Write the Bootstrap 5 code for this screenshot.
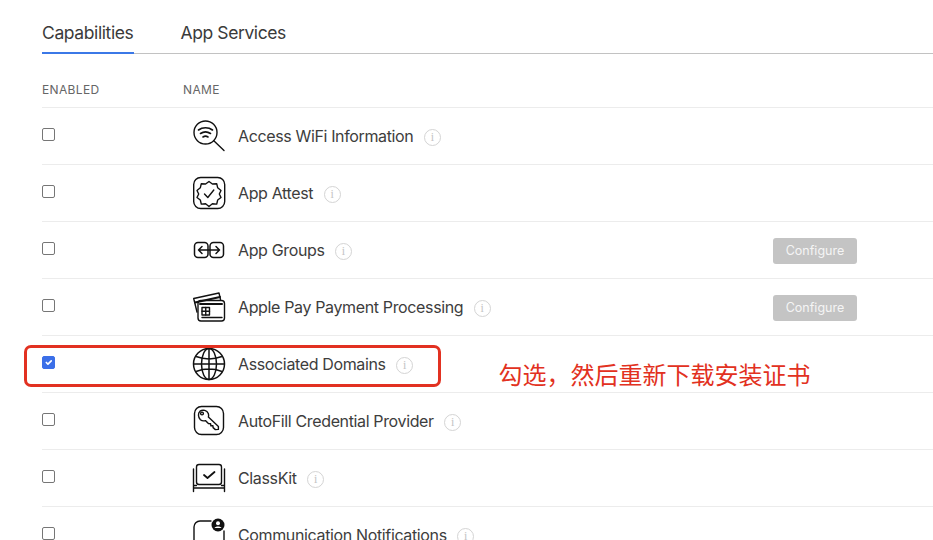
<!doctype html>
<html lang="en">
<head>
<meta charset="utf-8">
<title>Capabilities</title>
<link href="https://cdn.jsdelivr.net/npm/bootstrap@5.3.0/dist/css/bootstrap.min.css" rel="stylesheet">
<style>
html,body{height:540px;overflow:hidden}
body{font-family:Inter,"Liberation Sans",sans-serif;color:#333;background:#fff;position:relative}
.page-wrap{padding:17px 0 0 42px;width:933px}
.tab-bar{border-bottom:1px solid #c2c2c2;height:37px;gap:46.500px}
.tab-item{font-size:17.500px;line-height:31px;height:37px;color:#3a3a3a;letter-spacing:-.4px;text-decoration:none;white-space:nowrap}
.tab-active{border-bottom:2px solid #3b78e7;width:92px}
.head-row{height:54px;align-items:flex-end;padding-bottom:10px;font-size:12px;line-height:15px;color:#666;border-bottom:1px solid #ececec;letter-spacing:.35px}
.col-enabled{width:141px;flex:none}
.cap-row{height:57px;border-bottom:1px solid #ececec;align-items:center}
.form-check-input.cap-check[type=checkbox]{width:13px;height:13px;margin:0 0 3px 0;border:1px solid #767676;border-radius:2px;display:block;box-shadow:none}
.form-check-input.cap-check[type=checkbox]:checked{background-color:#3b6fe8;border-color:#3b6fe8}
.icon-cell{width:55px;flex:none;padding-left:9px;display:flex;align-items:center}
.cap-ico{width:34px;height:34px;display:block;color:#111}
.cap-name{font-size:16px;line-height:20px;letter-spacing:-.36px;color:#3d3d3d;white-space:nowrap}
.info-dot{width:17px;height:17px;margin-left:10.500px;margin-top:2px;flex:none;border:1px solid #d4d4d4;border-radius:50%;color:#c4c4c4;font:12px/15px "Liberation Serif",serif;text-align:center}
.cfg-btn{background:#c4c4c4;border:0;font-size:12.500px;line-height:16px;height:26px;width:84px;padding:0;border-radius:3px;margin:2px 76px 0 0}
.cfg-btn:disabled{background:#c4c4c4;color:#f5f5f5;opacity:1}
.clip-row{height:34px;overflow:hidden}
.clip-inner{height:57px}
.mark-box{position:absolute;left:24px;top:345px;width:417px;height:42px;border:3px solid #e23121;border-radius:7px;pointer-events:none}
.mark-note{position:absolute;left:498.500px;top:356px;font:400 24px/36px "Noto Sans CJK SC",sans-serif;color:#e23121;white-space:nowrap}
</style>
</head>
<body>
<div class="page-wrap">
  <nav class="tab-bar d-flex">
    <a class="tab-item tab-active" href="#">Capabilities</a>
    <a class="tab-item" href="#">App Services</a>
  </nav>
  <div class="head-row d-flex"><div class="col-enabled">ENABLED</div><div>NAME</div></div>

  <div class="cap-row d-flex">
    <div class="col-enabled"><input class="form-check-input cap-check" type="checkbox" aria-label="Access WiFi Information"></div>
    <div class="icon-cell"><svg class="cap-ico" viewBox="0 0 34 34" fill="none" stroke="currentColor" stroke-width="1.400" stroke-linecap="round"><circle cx="13.500" cy="13.500" r="11.500"/><path d="M21.800 21.800 32 31.500"/><path d="M6.500 11c4-3 10-3 14 0M8.500 14.500c3-2 7-2 10 0M11 18c1.500-1 3.500-1 5 0" stroke-width="1.600"/></svg></div>
    <div class="cap-name">Access WiFi Information</div><div class="info-dot">i</div>
  </div>

  <div class="cap-row d-flex">
    <div class="col-enabled"><input class="form-check-input cap-check" type="checkbox" aria-label="App Attest"></div>
    <div class="icon-cell"><svg class="cap-ico" viewBox="0 0 34 34" fill="none" stroke="currentColor" stroke-width="1.400" stroke-linejoin="round" stroke-linecap="round"><rect x="1.700" y="1.500" width="31" height="31" rx="7"/><path d="M17 5.500l3.400 2.500 4.300-.3 1 4.100 3.300 2.700-1.700 3.500 1.700 3.500-3.300 2.500-1 4.100-4.300-.3L17 30.500l-3.400-2.700-4.300.3-1-4.100L5 21.500 6.700 18 5 14.500l3.300-2.700 1-4.100 4.300.3z"/><path d="M12.500 18l3.300 3.500 6-7.500"/></svg></div>
    <div class="cap-name">App Attest</div><div class="info-dot">i</div>
  </div>

  <div class="cap-row d-flex">
    <div class="col-enabled"><input class="form-check-input cap-check" type="checkbox" aria-label="App Groups"></div>
    <div class="icon-cell"><svg class="cap-ico" viewBox="0 0 34 34" fill="none" stroke="currentColor" stroke-width="1.500" stroke-linecap="round" stroke-linejoin="round"><rect x="2.500" y="9.500" width="13.500" height="15" rx="3.500"/><rect x="18" y="9.500" width="13.500" height="15" rx="3.500"/><path d="M6.500 17H27.500M10 13.500 6.500 17l3.500 3.500M24 13.500l3.500 3.500-3.500 3.500"/></svg></div>
    <div class="cap-name">App Groups</div><div class="info-dot">i</div>
    <button class="btn cfg-btn ms-auto" disabled>Configure</button>
  </div>

  <div class="cap-row d-flex">
    <div class="col-enabled"><input class="form-check-input cap-check" type="checkbox" aria-label="Apple Pay Payment Processing"></div>
    <div class="icon-cell"><svg class="cap-ico" viewBox="0 0 34 34" fill="none" stroke="currentColor" stroke-width="1.400" stroke-linecap="round" stroke-linejoin="round"><path d="M5 22 1.700 8.500 27 3l1.500 6.500"/><path d="M3 12.500 28 7" stroke-width="2"/><rect x="6" y="10.500" width="26.500" height="20.500" rx="3"/><path d="M8 14h22" stroke-width="2"/><rect x="10" y="17.500" width="7.500" height="7.500"/><path d="M13.750 17.500v7.500M10 21.250h7.500M10 27.500h20"/></svg></div>
    <div class="cap-name">Apple Pay Payment Processing</div><div class="info-dot">i</div>
    <button class="btn cfg-btn ms-auto" disabled>Configure</button>
  </div>

  <div class="cap-row d-flex">
    <div class="col-enabled"><input class="form-check-input cap-check" type="checkbox" checked aria-label="Associated Domains"></div>
    <div class="icon-cell"><svg class="cap-ico" viewBox="0 0 34 34" fill="none" stroke="currentColor" stroke-width="1.500"><circle cx="17" cy="17" r="15.500"/><ellipse cx="17" cy="17" rx="7.500" ry="15.500"/><path d="M17 1.500v31M1.500 17h31M4 9.500c8 3 18 3 26 0M4 24.500c8-3 18-3 26 0"/></svg></div>
    <div class="cap-name">Associated Domains</div><div class="info-dot">i</div>
  </div>

  <div class="cap-row d-flex">
    <div class="col-enabled"><input class="form-check-input cap-check" type="checkbox" aria-label="AutoFill Credential Provider"></div>
    <div class="icon-cell"><svg class="cap-ico" viewBox="0 0 34 34" fill="none" stroke="currentColor" stroke-width="1.400" stroke-linecap="round" stroke-linejoin="round"><rect x="2.500" y="2.500" width="29" height="28" rx="7"/><path d="M8 7.200c3-2 7-.8 8.300 2.300.5 1.300.4 2.600.1 3.600l10 9.300v3l-3 .2-2.300-2-.2-2-2 .2-.3-2-2.200-.2-3-3c-1.500.5-3.500.3-5-.9C6 13.500 5.800 9 8 7.200z"/><circle cx="10" cy="9.500" r="1.400"/></svg></div>
    <div class="cap-name">AutoFill Credential Provider</div><div class="info-dot">i</div>
  </div>

  <div class="cap-row d-flex">
    <div class="col-enabled"><input class="form-check-input cap-check" type="checkbox" aria-label="ClassKit"></div>
    <div class="icon-cell"><svg class="cap-ico" viewBox="0 0 34 34" fill="none" stroke="currentColor" stroke-width="1.400" stroke-linecap="round" stroke-linejoin="round"><rect x="4.500" y="3.500" width="25" height="20" rx="2.500"/><path d="M12 14l3.500 3 7-6" stroke-width="1.800"/><path d="M1.500 8v22.500M32.500 8v22.500M1.500 27h31M1.500 24.500h3M29.500 24.500h3"/></svg></div>
    <div class="cap-name">ClassKit</div><div class="info-dot">i</div>
  </div>

  <div class="clip-row">
    <div class="cap-row d-flex clip-inner">
      <div class="col-enabled"><input class="form-check-input cap-check" type="checkbox" aria-label="Communication Notifications"></div>
      <div class="icon-cell"><svg class="cap-ico" viewBox="0 0 34 34" fill="none" stroke="currentColor" stroke-width="1.400" stroke-linecap="round"><path d="M19 3H8a6 6 0 0 0-6 6v20a3 3 0 0 0 3 3h24a3 3 0 0 0 3-3V13"/><circle cx="26" cy="7" r="6.500" fill="currentColor" stroke="none"/><circle cx="26" cy="5.200" r="2" fill="#fff" stroke="none"/><path d="M22.500 10c1-2 6-2 7 0z" fill="#fff" stroke="none"/></svg></div>
      <div class="cap-name">Communication Notifications</div><div class="info-dot">i</div>
    </div>
  </div>
</div>
<div class="mark-box"></div>
<div class="mark-note">勾选，然后重新下载安装证书</div>
<script src="https://cdn.jsdelivr.net/npm/bootstrap@5.3.0/dist/js/bootstrap.bundle.min.js"></script>
</body>
</html>
